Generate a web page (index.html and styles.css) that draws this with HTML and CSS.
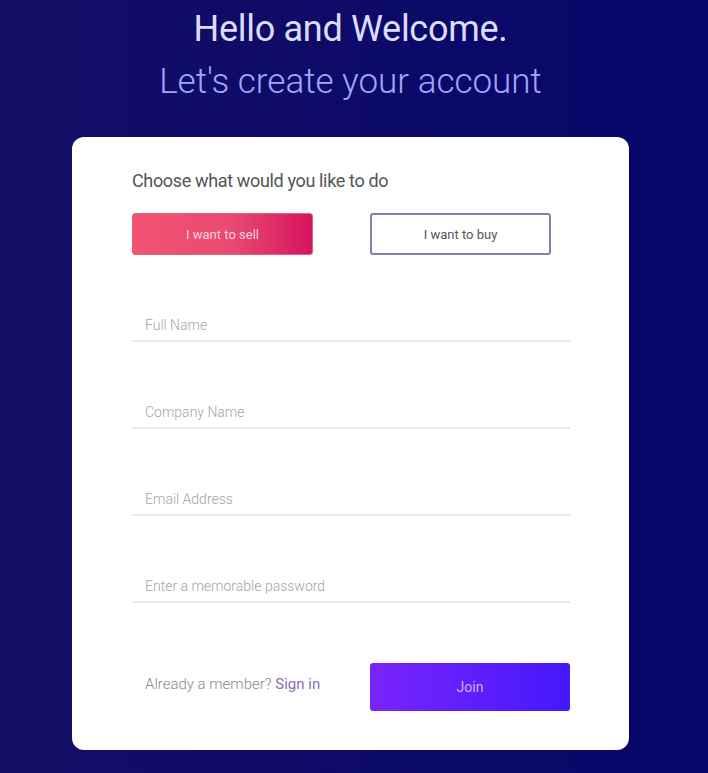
FILE: index.html
```html
<!DOCTYPE html>
<html lang="en">
<head>
  <meta charset="UTF-8">
  <meta name="viewport" content="width=device-width, initial-scale=1.0">
  <title>Sign Up</title>
  <link rel="stylesheet" href="styles.css">
</head>
<body>
  <div class="page">
    <!-- Heading -->
    <div class="intro">
      <h1>Hello and Welcome.</h1>
      <h2>Let's create your account</h2>
    </div>

    <!-- Sign up card -->
    <div class="card">
      <p class="choose">Choose what would you like to do</p>
      <div class="choice">
        <button type="button" class="btn-sell">I want to sell</button>
        <button type="button" class="btn-buy">I want to buy</button>
      </div>

      <form class="fields" onsubmit="event.preventDefault()">
        <input type="text" placeholder="Full Name">
        <input type="text" placeholder="Company Name">
        <input type="email" placeholder="Email Address">
        <input type="password" placeholder="Enter a memorable password">

        <div class="footer">
          <div class="member">Already a member? <a href="#">Sign in</a></div>
          <button type="submit" class="btn-join">Join</button>
        </div>
      </form>
    </div>
  </div>
</body>
</html>
```

FILE: styles.css
```css
/* Reset some default styles */
* {
  margin: 0;
  padding: 0;
  box-sizing: border-box;
}

body {
  font-family: Roboto, 'Liberation Sans', sans-serif;
  background: linear-gradient(90deg, #130f66, #07066a);
  min-height: 100vh;
}

.page {
  display: flex;
  flex-direction: column;
  align-items: center;
  padding-top: 8px;
  padding-right: 7px;
}

.intro {
  text-align: center;
}

.intro h1 {
  font-size: 36px;
  font-weight: 400;
  color: #dcdcff;
  line-height: 42px;
  letter-spacing: -0.3px;
}

.intro h2 {
  font-size: 35px;
  font-weight: 300;
  color: #a4a4ff;
  line-height: 42px;
  margin-top: 11px;
}

.card {
  width: 557px;
  margin-top: 34px;
  background: #fff;
  border-radius: 12px;
  padding: 32px 59px 39px 60px;
}

.choose {
  font-size: 18px;
  color: #555;
  line-height: 24px;
  letter-spacing: -0.35px;
}

.choice {
  display: flex;
  justify-content: space-between;
  margin-top: 20px;
  padding-right: 19px;
}

.choice button {
  width: 181px;
  height: 42px;
  border-radius: 3px;
  font-family: inherit;
  font-size: 13px;
  cursor: pointer;
}

.btn-sell {
  background: linear-gradient(90deg, #f2536f, #e84a73 55%, #d7145f);
  border: 1px solid #e3607f;
  color: #fbd3de;
}

.btn-buy {
  background: #fff;
  border: 2px solid #8e79b5;
  color: #555;
}

.fields {
  display: flex;
  flex-direction: column;
  margin-top: 48px;
}

.fields input {
  border: none;
  border-bottom: 2px solid #e6eaeb;
  padding: 14px 13px 7px;
  margin-bottom: 48px;
  font-family: inherit;
  font-size: 14px;
  font-weight: 300;
  color: #333;
  outline: none;
}

.fields input::placeholder {
  color: #a5a5a5;
}

.footer {
  display: flex;
  justify-content: space-between;
  align-items: flex-start;
  margin-top: 12px;
}

.member {
  font-size: 15px;
  font-weight: 300;
  color: #8a8a8a;
  padding: 12px 0 0 13px;
}

.member a {
  color: #8a6fb3;
  font-weight: 400;
  text-decoration: none;
}

.btn-join {
  width: 200px;
  height: 48px;
  border: none;
  border-radius: 3px;
  background: linear-gradient(90deg, #7a24fb, #4418fd);
  color: #cdb4f5;
  font-family: inherit;
  font-size: 14px;
  cursor: pointer;
}
```
